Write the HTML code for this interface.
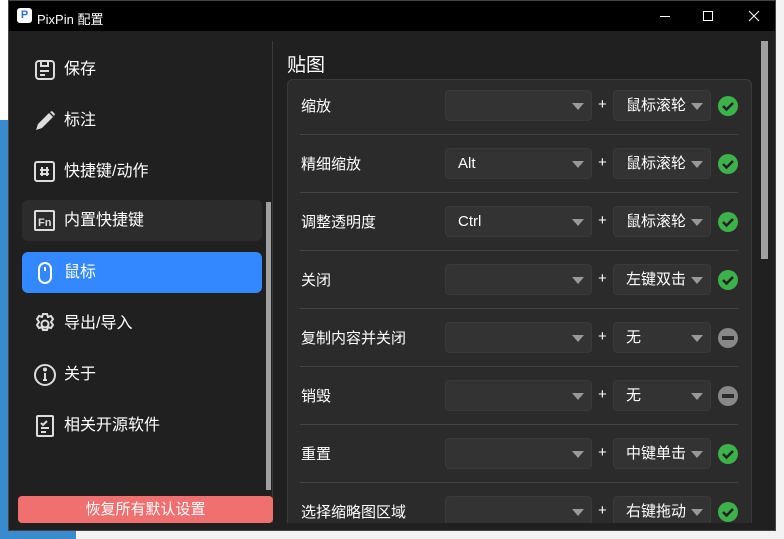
<!DOCTYPE html>
<html><head><meta charset="utf-8"><style>
*{margin:0;padding:0;box-sizing:border-box}
body{width:784px;height:539px;overflow:hidden;background:#f3f3f3;font-family:"Liberation Sans","Noto Sans CJK SC",sans-serif;position:relative}
.bgblue{position:absolute;left:0;top:120px;width:76px;height:419px;background:#3a8ad0}
.bgtop{position:absolute;left:0;top:0;width:8px;height:120px;background:#fff}
.win{position:absolute;left:8px;top:0;width:768px;height:531px;background:#202020;border:1px solid #444;overflow:hidden}
.title{height:30px;background:#000;color:#fff;font-size:13px;position:relative}
.logo{position:absolute;left:8px;top:7px;width:15px;height:15px;background:#fff;border-radius:3px;color:#2f6fe0;font-weight:bold;font-size:11px;text-align:center;line-height:15px}
.title .t{position:absolute;left:28px;top:8px}
.ctl{position:absolute;top:0;height:30px;width:40px;color:#fff}
.nav{position:absolute;left:13px;width:240px;height:41px;border-radius:6px;color:#fff;font-size:16px;line-height:41px;padding-left:42px}
.nav svg{position:absolute;left:11px;top:9px}
.sel{background:#3388ff}
.hov{background:#2c2c2c}
.reset{position:absolute;left:9px;top:495px;width:255px;height:27px;background:#f07070;border-radius:4px;color:#fff;font-size:15px;text-align:center;line-height:27px}
.card{position:absolute;left:278px;top:78px;width:465px;height:460px;background:#2b2b2b;border:1px solid #3a3a3a;border-radius:6px;overflow:hidden}
.row{position:absolute;left:12px;width:438px;height:58px;border-bottom:1px solid #444}
.row .l{position:absolute;left:1px;top:18px;color:#fff;font-size:15px}
.dd{position:absolute;top:13px;height:31px;background:#333;border:1px solid #3a3a3a;border-radius:4px;color:#fff;font-size:15px;line-height:29px;padding-left:12px}
.dd:after{content:"";position:absolute;right:7px;top:12px;border-left:6px solid transparent;border-right:6px solid transparent;border-top:7px solid #999}
.d1{left:145px;width:147px}
.d2{left:313px;width:98px}
.plus{position:absolute;left:298px;top:19px;color:#fff;font-size:15px}
.ok{position:absolute;left:418px;top:19px;width:20px;height:20px;border-radius:50%;background:#3db24a}
.no{position:absolute;left:418px;top:19px;width:20px;height:20px;border-radius:50%;background:#888}
.no:after{content:"";position:absolute;left:4px;top:8px;width:12px;height:4px;background:#2b2b2b}
</style></head><body>
<div class="bgtop"></div><div class="bgblue"></div>
<div class="win">
<div class="title"><div class="logo">P</div><span class="t">PixPin 配置</span>
<svg class="ctl" style="left:636px" width="40" height="30"><line x1="15" y1="15.5" x2="25" y2="15.5" stroke="#fff"/></svg>
<svg class="ctl" style="left:680px" width="40" height="30"><rect x="14.5" y="10.5" width="9" height="9" fill="none" stroke="#fff"/></svg>
<svg class="ctl" style="left:726px" width="40" height="30"><path d="M14 10L24 20M24 10L14 20" stroke="#fff"/></svg>
</div>
<div class="nav" style="top:48px"><svg width="24" height="24" fill="none" stroke="#ddd" stroke-width="2"><rect x="3" y="3" width="18" height="18" rx="3"/><path d="M8 3v5h7V3M7 13h9M7 17h5"/></svg>保存</div>
<div class="nav" style="top:99px"><svg width="24" height="24" fill="#ddd"><path d="M3 21l2-6L16 4l4 4L9 19zM17 3l2-1 3 3-1 2z"/></svg>标注</div>
<div class="nav" style="top:150px"><svg width="24" height="24" fill="none" stroke="#ddd" stroke-width="2"><rect x="2" y="2" width="19" height="19" rx="2"/><path d="M9 7v9M14 7v9M7 10h9M7 14h9"/></svg>快捷键/动作</div>
<div class="nav hov" style="top:199px"><svg width="24" height="24" fill="none" stroke="#ddd" stroke-width="2"><rect x="2" y="2" width="19" height="19" rx="1"/><text x="5" y="17" fill="#ddd" stroke="none" font-size="11" font-weight="bold" font-family="Liberation Sans">Fn</text></svg>内置快捷键</div>
<div class="nav sel" style="top:251px"><svg width="24" height="24" fill="none" stroke="#fff" stroke-width="2"><rect x="6" y="2" width="12" height="20" rx="6"/><path d="M12 6v4"/></svg>鼠标</div>
<div class="nav" style="top:302px"><svg width="24" height="24" fill="none" stroke="#ddd" stroke-width="2"><circle cx="12" cy="12" r="3.5"/><path d="M10 2h4l1 3 3-1 2 3-2 3 2 3-2 3-3-1-1 3h-4l-1-3-3 1-2-3 2-3-2-3 2-3 3 1z"/></svg>导出/导入</div>
<div class="nav" style="top:353px"><svg width="24" height="24" fill="none" stroke="#ddd" stroke-width="2"><circle cx="12" cy="12" r="10"/><path d="M12 10v7M10 17h4"/><circle cx="12" cy="6.5" r="1" fill="#ddd"/></svg>关于</div>
<div class="nav" style="top:404px"><svg width="24" height="24" fill="none" stroke="#ddd" stroke-width="2"><rect x="4" y="2" width="16" height="20" rx="1"/><path d="M8 9l2 2 4-4M8 14h8M8 18h5"/></svg>相关开源软件</div>
<div style="position:absolute;left:257px;top:201px;width:5px;height:288px;background:#a0a0a0"></div>
<div style="position:absolute;left:263px;top:40px;width:1px;height:491px;background:#3a3a3a"></div>
<div class="reset">恢复所有默认设置</div>
<div style="position:absolute;left:278px;top:49px;color:#fff;font-size:19px">贴图</div>
<div style="position:absolute;left:752px;top:40px;width:7px;height:218px;background:#a0a0a0"></div>
<div class="card">
<div class="row" style="top:-3px"><span class="l">缩放</span><div class="dd d1"></div><span class="plus">+</span><div class="dd d2">鼠标滚轮</div><div class="ok"><svg width="20" height="20"><path d="M5 10l3.5 3.5L15 7" fill="none" stroke="#222" stroke-width="2.5"/></svg></div></div>
<div class="row" style="top:55px"><span class="l">精细缩放</span><div class="dd d1">Alt</div><span class="plus">+</span><div class="dd d2">鼠标滚轮</div><div class="ok"><svg width="20" height="20"><path d="M5 10l3.5 3.5L15 7" fill="none" stroke="#222" stroke-width="2.5"/></svg></div></div>
<div class="row" style="top:113px"><span class="l">调整透明度</span><div class="dd d1">Ctrl</div><span class="plus">+</span><div class="dd d2">鼠标滚轮</div><div class="ok"><svg width="20" height="20"><path d="M5 10l3.5 3.5L15 7" fill="none" stroke="#222" stroke-width="2.5"/></svg></div></div>
<div class="row" style="top:171px"><span class="l">关闭</span><div class="dd d1"></div><span class="plus">+</span><div class="dd d2">左键双击</div><div class="ok"><svg width="20" height="20"><path d="M5 10l3.5 3.5L15 7" fill="none" stroke="#222" stroke-width="2.5"/></svg></div></div>
<div class="row" style="top:229px"><span class="l">复制内容并关闭</span><div class="dd d1"></div><span class="plus">+</span><div class="dd d2">无</div><div class="no"></div></div>
<div class="row" style="top:287px"><span class="l">销毁</span><div class="dd d1"></div><span class="plus">+</span><div class="dd d2">无</div><div class="no"></div></div>
<div class="row" style="top:345px"><span class="l">重置</span><div class="dd d1"></div><span class="plus">+</span><div class="dd d2">中键单击</div><div class="ok"><svg width="20" height="20"><path d="M5 10l3.5 3.5L15 7" fill="none" stroke="#222" stroke-width="2.5"/></svg></div></div>
<div class="row" style="top:403px;border:0"><span class="l">选择缩略图区域</span><div class="dd d1"></div><span class="plus">+</span><div class="dd d2">右键拖动</div><div class="ok"><svg width="20" height="20"><path d="M5 10l3.5 3.5L15 7" fill="none" stroke="#222" stroke-width="2.5"/></svg></div></div>
</div>
<div style="position:absolute;left:0;top:522px;width:768px;height:10px;background:#202020"></div>
</div>
</body></html>
